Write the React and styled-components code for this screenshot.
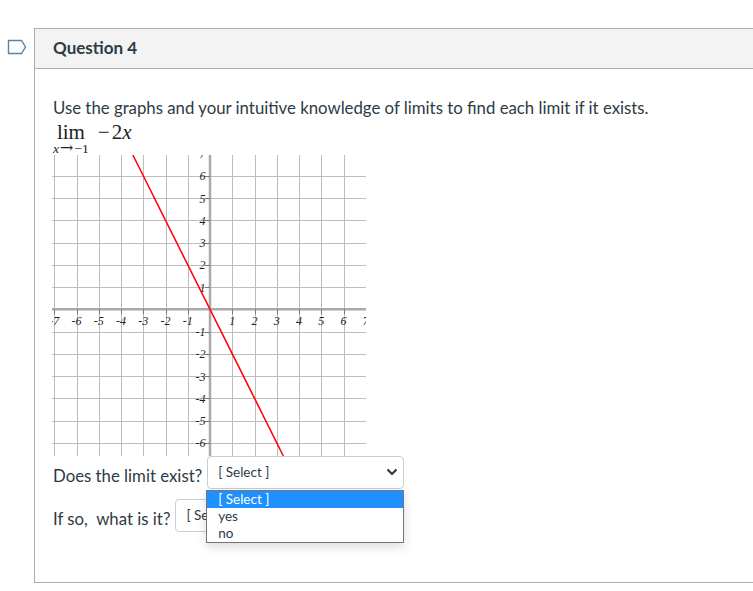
import React from 'react';
import styled, { createGlobalStyle } from 'styled-components';

const Global = createGlobalStyle`
  html, body { margin: 0; padding: 0; background: #fff; overflow: hidden; }
  body { font-family: Lato, "Noto Sans", sans-serif; color: #2d3b45; }
`;

const Page = styled.div`
  display: flex;
  padding-top: 28px;
  width: 753px;
  overflow: hidden;
`;

const Gutter = styled.div`
  flex: 0 0 34px;
  box-sizing: border-box;
  padding: 11px 0 0 7px;
`;

const Panel = styled.section`
  flex: 0 0 760px;
  border: 1px solid #adadad;
  border-right: none;
  background: #fff;
`;

const Header = styled.header`
  height: 40px;
  box-sizing: border-box;
  display: flex;
  align-items: center;
  padding: 0 0 3px 18px;
  background: #f3f3f3;
  border-bottom: 1px solid #adadad;
  font-weight: 700;
  font-size: 17px;
`;

const Body = styled.div`
  padding: 27px 18px 50px 18px;
`;

const Prompt = styled.p`
  margin: 0;
  font-size: 16.8px;
  line-height: 24px;
`;

const MathRow = styled.div`
  display: flex;
  align-items: flex-start;
  height: 34px;
  margin-top: 1px;
  font-family: "Liberation Serif", "DejaVu Serif", serif;
  color: #222;
`;

const LimCol = styled.div`
  display: flex;
  flex-direction: column;
  align-items: center;
`;

const Lim = styled.span`
  font-size: 21px;
  line-height: 22px;
`;

const Sub = styled.span`
  display: flex;
  align-items: baseline;
  font-size: 13.5px;
  line-height: 12px;
  white-space: nowrap;
  margin-top: -1px;
`;

const Arrow = styled.span`
  font-family: "DejaVu Serif", serif;
  font-size: 16px;
  line-height: 12px;
  margin: 0 1px;
`;

const Expr = styled.span`
  font-size: 21px;
  line-height: 22px;
  margin-left: 9px;
  white-space: nowrap;
`;

const Minus = styled.span`
  margin-right: 2px;
`;

const Var = styled.i`
  font-style: italic;
`;

const GraphSvg = styled.svg`
  display: block;
  margin-left: -1px;
`;

const Row = styled.div`
  display: flex;
  align-items: center;
  gap: 5px;
  font-size: 16.8px;
  margin-top: ${(p) => p.$gap || 0}px;
`;

const Label = styled.span`
  line-height: 24px;
  padding-top: 6px;
  white-space: pre;
`;

const SelectWrap = styled.div`
  position: relative;
`;

const SelectBox = styled.div`
  width: 197px;
  height: 33px;
  box-sizing: border-box;
  border: 1px solid #c7cdd1;
  border-radius: 4px;
  display: flex;
  align-items: center;
  justify-content: space-between;
  padding: 0 5px 1px 10px;
  font-size: 13.5px;
  color: #2d3b45;
  background: #fff;
`;

const List = styled.ul`
  position: absolute;
  top: calc(100% + 1px);
  left: -1px;
  width: 198px;
  box-sizing: border-box;
  margin: 0;
  padding: 0;
  list-style: none;
  border: 1px solid #767676;
  background: #fff;
  box-shadow: 0 4px 10px rgba(0, 0, 0, 0.14);
  z-index: 2;
  font-size: 13.5px;
`;

const Option = styled.li`
  height: 17px;
  line-height: 17px;
  padding-left: 11px;
  background: ${(p) => (p.$active ? '#1e90ff' : '#fff')};
  color: ${(p) => (p.$active ? '#fff' : '#2d3b45')};
`;

const Flag = () => (
  <svg width="20" height="16" viewBox="0 0 20 16">
    <path d="M1.5 1.5 H14.5 L18.5 8 L14.5 14.5 H1.5 Z" fill="none" stroke="#5a82a3" strokeWidth="1.4" strokeLinejoin="miter" />
  </svg>
);

const Chevron = () => (
  <svg width="12" height="8" viewBox="0 0 12 8">
    <path d="M1.5 1.5 L6 6 L10.5 1.5" fill="none" stroke="#2d3b45" strokeWidth="2.2" />
  </svg>
);

const W = 314;
const H = 301;
const X0 = 158;
const Y0 = 154.3;
const U = 22.25;
const px = (x) => X0 + x * U;
const py = (y) => Y0 - y * U;
const snap = (v) => Math.round(v) + 0.5;

const Graph = () => {
  const xs = [];
  for (let i = -7; i <= 7; i++) xs.push(i);
  const ys = [];
  for (let j = -7; j <= 7; j++) ys.push(j);
  const xTop = Y0 / U;
  const xBot = (Y0 - H) / U;
  return (
    <GraphSvg width={W} height={H} viewBox={`0 0 ${W} ${H}`}>
      {xs.map((i) => (
        <line key={'v' + i} x1={snap(px(i))} x2={snap(px(i))} y1={0} y2={H} stroke="#bdbdbd" strokeWidth="1" />
      ))}
      {ys.map((j) => (
        <line key={'h' + j} x1={0} x2={W} y1={snap(py(j))} y2={snap(py(j))} stroke="#bdbdbd" strokeWidth="1" />
      ))}
      <line x1={0} x2={W} y1={py(0)} y2={py(0)} stroke="#aaaaaa" strokeWidth="2.5" />
      <line x1={px(0)} x2={px(0)} y1={0} y2={H} stroke="#aaaaaa" strokeWidth="2.5" />
      {xs.filter((i) => i !== 0).map((i) => (
        <line key={'tx' + i} x1={snap(px(i))} x2={snap(px(i))} y1={py(0)} y2={py(0) + 5} stroke="#777" strokeWidth="1" />
      ))}
      {ys.filter((j) => j !== 0).map((j) => (
        <line key={'ty' + j} x1={px(0) - 5} x2={px(0)} y1={snap(py(j))} y2={snap(py(j))} stroke="#777" strokeWidth="1" />
      ))}
      <g fontFamily='"Liberation Serif", serif' fontStyle="italic" fontSize="12" fill="#222">
        {xs.filter((i) => i !== 0).map((i) => (
          <text key={'lx' + i} x={px(i)} y={py(0) + 15.5} textAnchor="middle">{i < 0 ? '-' + -i : i}</text>
        ))}
        {ys.filter((j) => j !== 0).map((j) => (
          <text key={'ly' + j} x={px(0) - 4.5} y={py(j) + 4.5} textAnchor="end">{j < 0 ? '-' + -j : j}</text>
        ))}
      </g>
      <line x1={px(-xTop / 2)} y1={0} x2={px(-xBot / 2)} y2={H} stroke="#ff0000" strokeWidth="1.5" />
    </GraphSvg>
  );
};

export default function App() {
  return (
    <>
      <Global />
      <Page>
        <Gutter>
          <Flag />
        </Gutter>
        <Panel>
          <Header>Question 4</Header>
          <Body>
            <Prompt>Use the graphs and your intuitive knowledge of limits to find each limit if it exists.</Prompt>
            <MathRow>
              <LimCol>
                <Lim>lim</Lim>
                <Sub>
                  <Var>x</Var>
                  <Arrow>→</Arrow>
                  <span>−1</span>
                </Sub>
              </LimCol>
              <Expr>
                <Minus>−</Minus>2<Var>x</Var>
              </Expr>
            </MathRow>
            <Graph />
            <Row>
              <Label>Does the limit exist?</Label>
              <SelectWrap>
                <SelectBox>
                  <span>[ Select ]</span>
                  <Chevron />
                </SelectBox>
                <List>
                  <Option $active>[ Select ]</Option>
                  <Option>yes</Option>
                  <Option>no</Option>
                </List>
              </SelectWrap>
            </Row>
            <Row $gap={10}>
              <Label>{'If so,  what is it?'}</Label>
              <SelectWrap>
                <SelectBox>
                  <span>[ Select ]</span>
                  <Chevron />
                </SelectBox>
              </SelectWrap>
            </Row>
          </Body>
        </Panel>
      </Page>
    </>
  );
}
